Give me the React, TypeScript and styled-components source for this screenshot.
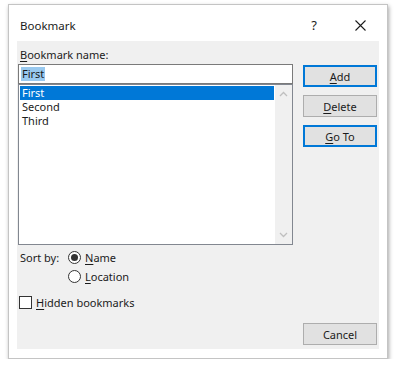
import React from "react";
import styled, { createGlobalStyle } from "styled-components";

const GlobalStyle = createGlobalStyle`
  html, body {
    margin: 0;
    background: #ffffff;
  }
  body {
    font-family: "Noto Sans", "Open Sans", sans-serif;
    font-size: 11px;
    color: #1b1b1b;
  }
`;

const Window = styled.div`
  margin: 4px 0 0 8px;
  width: 378px;
  height: 353px;
  background: #ffffff;
  border: 1px solid #c4c4c4;
  box-shadow: 1px 2px 4px rgba(0, 0, 0, 0.35);
  display: flex;
  flex-direction: column;
`;

const TitleBar = styled.div`
  height: 36px;
  display: flex;
  align-items: center;
  padding: 4px 4px 0 11px;
  box-sizing: border-box;
  font-size: 11.5px;
`;

const Title = styled.span`
  flex: 1;
`;

const TitleButton = styled.span`
  width: 46px;
  height: 30px;
  display: flex;
  align-items: center;
  justify-content: center;
  font-size: 13px;
`;

const Body = styled.div`
  flex: 1;
  margin: 0 8px 9px 8px;
  background: #f0f0f0;
  padding: 6px 2px 4px 1px;
  display: flex;
  gap: 10px;
`;

const LeftCol = styled.div`
  width: 275px;
  display: flex;
  flex-direction: column;
`;

const RightCol = styled.div`
  width: 74px;
  display: flex;
  flex-direction: column;
  gap: 8px;
  padding-top: 18px;
`;

const Label = styled.div`
  height: 17px;
  line-height: 16px;
  padding-left: 2px;
`;

const Key = styled.u`
  text-underline-offset: 2px;
`;

const Input = styled.div`
  height: 18px;
  border: 1px solid #7a7a7a;
  background: #ffffff;
  display: flex;
  align-items: center;
  padding-left: 2px;
`;

const Selection = styled.span`
  background: #99c9ef;
  padding: 0 1px;
  line-height: 14px;
`;

const List = styled.div`
  height: 159px;
  border: 1px solid #828790;
  background: #ffffff;
  display: flex;
`;

const Items = styled.div`
  flex: 1;
  padding: 1px 1px 0 1px;
`;

const Item = styled.div<{ $selected?: boolean }>`
  height: 14px;
  line-height: 14px;
  padding-left: 2px;
  background: ${(p) => (p.$selected ? "#0078d7" : "transparent")};
  color: ${(p) => (p.$selected ? "#ffffff" : "#1b1b1b")};
`;

const ScrollBar = styled.div`
  width: 17px;
  background: #f0f0f0;
  display: flex;
  flex-direction: column;
  justify-content: space-between;
  align-items: center;
  padding: 6px 0 6px;
`;

const SortRow = styled.div`
  display: flex;
  align-items: center;
  height: 18px;
  margin-top: 3px;
  padding-left: 2px;
`;

const SortLabel = styled.span`
  width: 48px;
`;

const RadioRow = styled.div`
  display: flex;
  align-items: center;
  gap: 4px;
  height: 18px;
  margin-top: 1px;
  margin-left: 50px;
`;

const Radio = styled.span<{ $checked?: boolean }>`
  width: 11px;
  height: 11px;
  border: 1px solid #333333;
  border-radius: 50%;
  background: #ffffff;
  display: flex;
  align-items: center;
  justify-content: center;
  &::after {
    content: "";
    width: 7px;
    height: 7px;
    border-radius: 50%;
    background: ${(p) => (p.$checked ? "#333333" : "transparent")};
  }
`;

const RadioText = styled.span`
  margin-left: 4px;
`;

const CheckRow = styled.div`
  display: flex;
  align-items: center;
  gap: 4px;
  height: 18px;
  margin-top: 8px;
  padding-left: 1px;
`;

const CheckBox = styled.span`
  width: 11px;
  height: 11px;
  border: 1px solid #333333;
  background: #ffffff;
`;

const Button = styled.div<{ $focus?: boolean }>`
  height: ${(p) => (p.$focus ? "18px" : "20px")};
  border: ${(p) => (p.$focus ? "2px solid #0078d7" : "1px solid #adadad")};
  background: #e1e1e1;
  display: flex;
  align-items: center;
  justify-content: center;
`;

const Spacer = styled.div`
  flex: 1;
`;

function Chevron({ up }: { up?: boolean }) {
  return (
    <svg width="9" height="6" viewBox="0 0 9 6">
      <path
        d={up ? "M1 5 L4.5 1.5 L8 5" : "M1 1 L4.5 4.5 L8 1"}
        fill="none"
        stroke="#bfbfbf"
        strokeWidth="1.3"
      />
    </svg>
  );
}

export default function App() {
  return (
    <>
      <GlobalStyle />
      <Window>
        <TitleBar>
          <Title>Bookmark</Title>
          <TitleButton>?</TitleButton>
          <TitleButton>
            <svg width="11" height="11" viewBox="0 0 11 11">
              <path d="M0.5 0.5 L10.5 10.5 M10.5 0.5 L0.5 10.5" stroke="#1b1b1b" strokeWidth="1.1" />
            </svg>
          </TitleButton>
        </TitleBar>
        <Body>
          <LeftCol>
            <Label>
              <Key>B</Key>ookmark name:
            </Label>
            <Input>
              <Selection>First</Selection>
            </Input>
            <List>
              <Items>
                <Item $selected>First</Item>
                <Item>Second</Item>
                <Item>Third</Item>
              </Items>
              <ScrollBar>
                <Chevron up />
                <Chevron />
              </ScrollBar>
            </List>
            <SortRow>
              <SortLabel>Sort by:</SortLabel>
              <Radio $checked />
              <RadioText>
                <Key>N</Key>ame
              </RadioText>
            </SortRow>
            <RadioRow>
              <Radio />
              <span>
                <Key>L</Key>ocation
              </span>
            </RadioRow>
            <CheckRow>
              <CheckBox />
              <span>
                <Key>H</Key>idden bookmarks
              </span>
            </CheckRow>
          </LeftCol>
          <RightCol>
            <Button $focus>
              <span>
                <Key>A</Key>dd
              </span>
            </Button>
            <Button>
              <span>
                <Key>D</Key>elete
              </span>
            </Button>
            <Button $focus>
              <span>
                <Key>G</Key>o To
              </span>
            </Button>
            <Spacer />
            <Button>Cancel</Button>
          </RightCol>
        </Body>
      </Window>
    </>
  );
}
